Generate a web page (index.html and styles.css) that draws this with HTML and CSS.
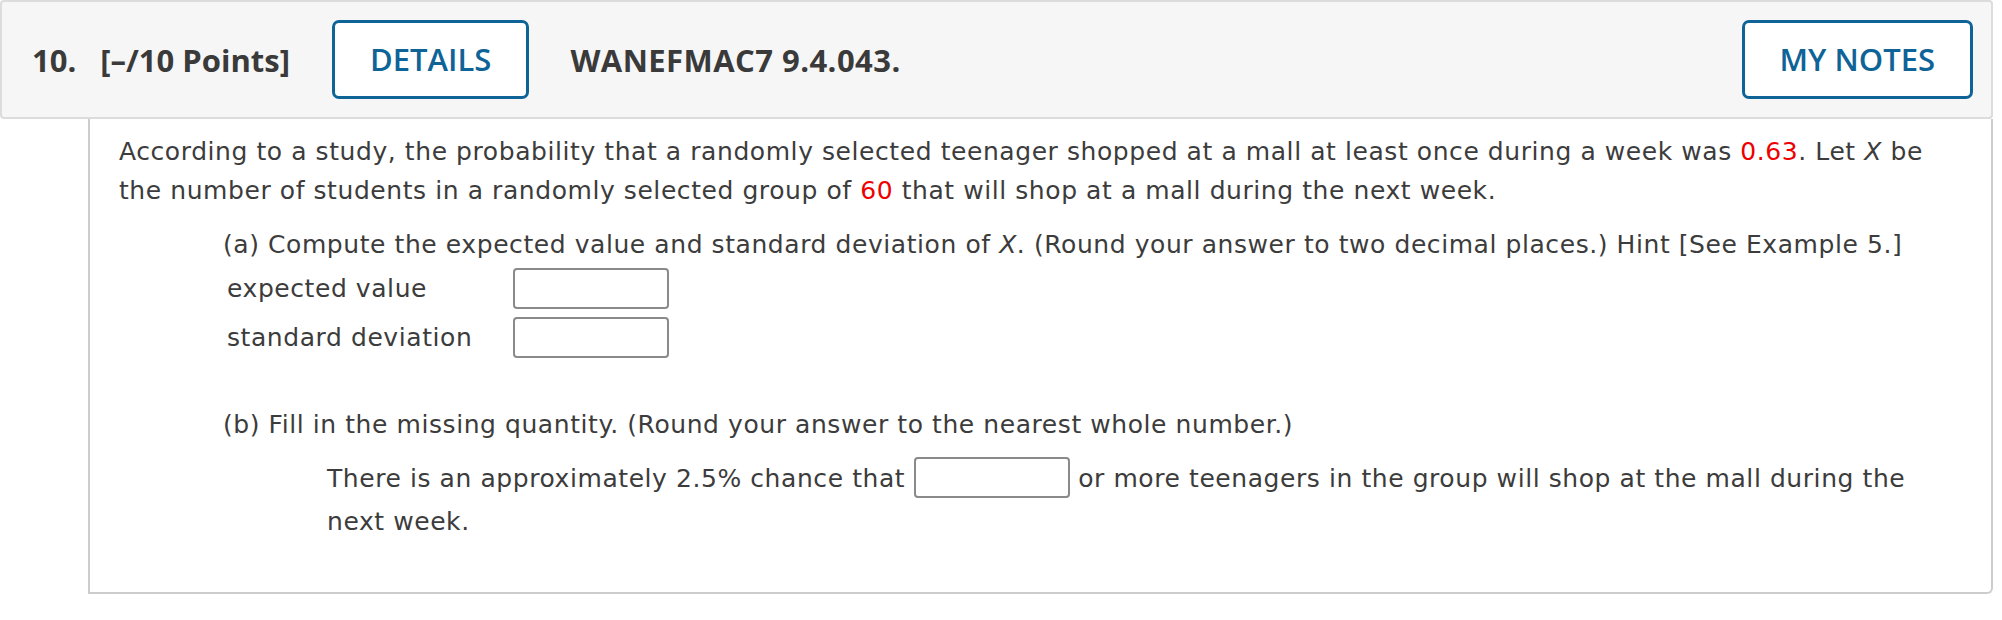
FILE: index.html
```html
<!DOCTYPE html>
<html lang="en">
<head>
<meta charset="utf-8">
<title>Question 10</title>
<link rel="stylesheet" href="styles.css">
</head>
<body>
<div class="question">
  <div class="q-header">
    <span class="q-num">10.</span>
    <span class="q-points">[–/10 Points]</span>
    <button class="btn btn-details">DETAILS</button>
    <span class="q-id">WANEFMAC7 9.4.043.</span>
    <button class="btn btn-notes">MY NOTES</button>
  </div>
  <div class="q-body">
    <p class="intro">According to a study, the probability that a randomly selected teenager shopped at a mall at least once during a week was <span class="red">0.63</span>. Let <i>X</i> be the number of students in a randomly selected group of <span class="red">60</span> that will shop at a mall during the next week.</p>
    <div class="part part-a">
      <p class="prompt">(a) Compute the expected value and standard deviation of <i>X</i>. (Round your answer to two decimal places.) Hint [See Example 5.]</p>
      <div class="answers">
        <span class="label">expected value</span><span class="blank"></span>
        <span class="label">standard deviation</span><span class="blank"></span>
      </div>
    </div>
    <div class="part part-b">
      <p class="prompt">(b) Fill in the missing quantity. (Round your answer to the nearest whole number.)</p>
      <p class="fill">There is an approximately 2.5% chance that <span class="blank blank-inline"></span> or more teenagers in the group will shop at the mall during the next week.</p>
    </div>
  </div>
</div>
</body>
</html>
```
FILE: styles.css
```css
html, body {
  margin: 0;
  padding: 0;
  background: #ffffff;
}

.question {
  width: 1993px;
}

.q-header {
  display: flex;
  align-items: center;
  box-sizing: border-box;
  height: 119px;
  padding: 0 18px 0 30px;
  background: #f6f6f6;
  border: 2px solid #dcdcdc;
  border-radius: 4px;
  font-family: "Open Sans", "Liberation Sans", sans-serif;
  color: #3a3a3a;
}

.q-num,
.q-points,
.q-id {
  font-size: 31px;
  font-weight: 700;
  white-space: nowrap;
}

.q-points {
  margin-left: 24px;
}

.q-id {
  margin-left: 41px;
  letter-spacing: 0.45px;
}

.btn {
  box-sizing: border-box;
  height: 79px;
  padding: 0 35px;
  background: #ffffff;
  border: 3px solid #0e6397;
  border-radius: 7px;
  color: #0e6397;
  font-family: "Open Sans", "Liberation Sans", sans-serif;
  font-size: 31px;
  font-weight: 600;
  line-height: 1;
}

.btn-details {
  margin-left: 42px;
}

.btn-notes {
  margin-left: auto;
}

.q-body {
  box-sizing: border-box;
  margin-left: 88px;
  padding: 13px 30px 49px 29px;
  border: 2px solid #cccccc;
  border-top: none;
  border-radius: 0 0 6px 0;
  font-family: "DejaVu Sans", Verdana, sans-serif;
  font-size: 25px;
  letter-spacing: 0.57px;
  line-height: 39px;
  color: #3c3c3c;
}

.q-body p {
  margin: 0;
}

.red {
  color: #ee0000;
}

.part {
  margin-left: 104px;
}

.part-a {
  margin-top: 15px;
}

.answers {
  display: grid;
  grid-template-columns: 286px 156px;
  row-gap: 8px;
  margin-top: 4px;
  padding-left: 4px;
}

.label {
  line-height: 41px;
}

.blank {
  display: block;
  box-sizing: border-box;
  width: 156px;
  height: 41px;
  background: #ffffff;
  border: 2px solid #8a8a8a;
  border-radius: 4px;
}

.part-b {
  margin-top: 47px;
}

.q-body .fill {
  margin: 13px 0 0 104px;
  line-height: 43px;
}

.blank-inline {
  display: inline-block;
  vertical-align: -11px;
}
```
